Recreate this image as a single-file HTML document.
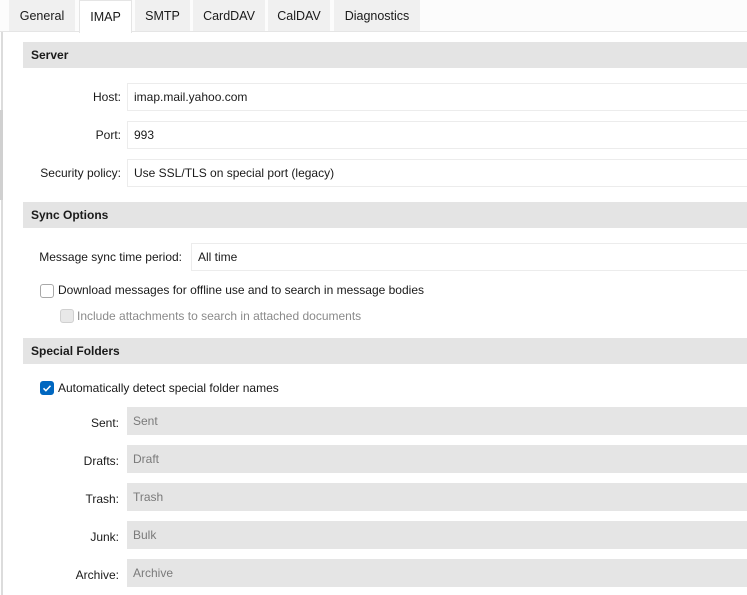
<!DOCTYPE html>
<html><head><style>
*{margin:0;padding:0;box-sizing:border-box}
body{width:747px;height:595px;overflow:hidden;background:#fff;font-family:"Liberation Sans",sans-serif;font-size:12px;color:#1a1a1a;position:relative}
.a{position:absolute}
.tabbar{left:0;top:0;width:747px;height:32px;background:#fcfcfc;border-bottom:1px solid #e5e5e5}
.tab{top:0;height:31px;background:#f0f0f0;line-height:33px;text-align:center;font-size:12.5px}
.tab.on{background:#fff;height:33px;border:1px solid #e5e5e5;border-bottom:none}
.lb{left:1px;top:32px;width:2px;height:563px;background:#dcdcdc}
.lb2{left:0;top:110px;width:3px;height:90px;background:#d0d0d0}
.hd{left:23px;width:724px;height:26px;background:#e4e4e4;font-weight:bold;padding-left:8px;line-height:27px;font-size:12px}
.lab{text-align:right;line-height:28px}
.in{left:127px;width:620px;height:28px;border:1px solid #ececec;border-right:none;padding-left:6px;line-height:26px}
.dis{background:#e5e5e5;border:none;color:#7a7a7a;line-height:28px}
.cb{width:14px;height:14px;border:1px solid #a8a8a8;border-radius:3px;background:#fff}
</style></head><body>
<div class="a tabbar"></div>
<div class="a tab" style="left:9px;width:66px">General</div>
<div class="a tab on" style="left:79px;width:53px">IMAP</div>
<div class="a tab" style="left:135px;width:55px">SMTP</div>
<div class="a tab" style="left:193px;width:72px">CardDAV</div>
<div class="a tab" style="left:268px;width:62px">CalDAV</div>
<div class="a tab" style="left:334px;width:86px">Diagnostics</div>
<div class="a lb"></div><div class="a lb2"></div>

<div class="a hd" style="top:42px">Server</div>
<div class="a lab" style="left:0;width:121px;top:83px">Host:</div>
<div class="a in" style="top:83px">imap.mail.yahoo.com</div>
<div class="a lab" style="left:0;width:121px;top:121px">Port:</div>
<div class="a in" style="top:121px">993</div>
<div class="a lab" style="left:0;width:121px;top:159px">Security policy:</div>
<div class="a in" style="top:159px">Use SSL/TLS on special port (legacy)</div>

<div class="a hd" style="top:202px">Sync Options</div>
<div class="a lab" style="left:0;width:182px;top:243px">Message sync time period:</div>
<div class="a in" style="left:191px;width:556px;top:243px">All time</div>
<div class="a cb" style="left:40px;top:284px"></div>
<div class="a" style="left:58px;top:283px">Download messages for offline use and to search in message bodies</div>
<div class="a cb" style="left:60px;top:309px;background:#e8e8e8;border-color:#d0d0d0"></div>
<div class="a" style="left:77px;top:309px;color:#8a8a8a">Include attachments to search in attached documents</div>

<div class="a hd" style="top:338px">Special Folders</div>
<div class="a cb" style="left:40px;top:381px;background:#0067c0;border-color:#0067c0"><svg width="12" height="12" viewBox="0 0 12 12" style="position:absolute;left:0;top:0"><path d="M2.5 6.3l2.4 2.4 4.6-5" fill="none" stroke="#fff" stroke-width="1.5"/></svg></div>
<div class="a" style="left:58px;top:381px">Automatically detect special folder names</div>

<div class="a lab" style="left:0;width:119px;top:409px">Sent:</div>
<div class="a in dis" style="top:407px">Sent</div>
<div class="a lab" style="left:0;width:119px;top:447px">Drafts:</div>
<div class="a in dis" style="top:445px">Draft</div>
<div class="a lab" style="left:0;width:119px;top:485px">Trash:</div>
<div class="a in dis" style="top:483px">Trash</div>
<div class="a lab" style="left:0;width:119px;top:523px">Junk:</div>
<div class="a in dis" style="top:521px">Bulk</div>
<div class="a lab" style="left:0;width:119px;top:561px">Archive:</div>
<div class="a in dis" style="top:559px">Archive</div>
</body></html>
